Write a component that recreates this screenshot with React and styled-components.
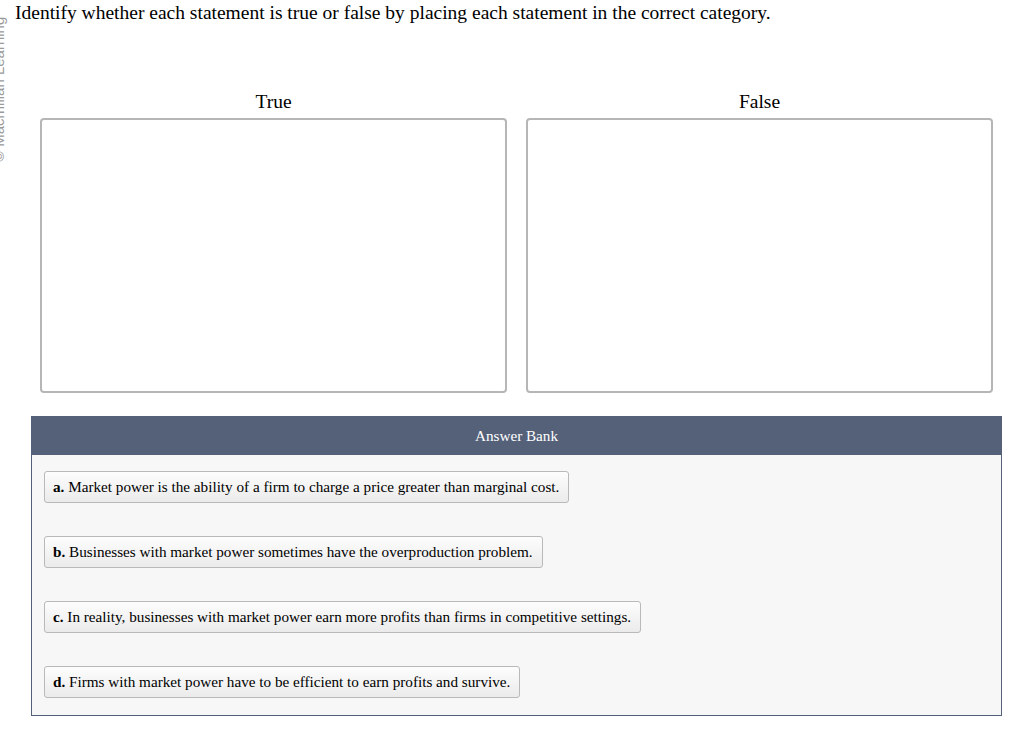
import React from "react";
import styled, { createGlobalStyle } from "styled-components";

const Global = createGlobalStyle`
  html, body { margin: 0; padding: 0; background: #fff; }
  body { font-family: "Liberation Serif", "Times New Roman", serif; color: #000; }
`;

const Page = styled.div`
  position: relative;
  width: 1024px;
  min-height: 753px;
  overflow: hidden;
`;

const Watermark = styled.span`
  position: absolute;
  left: -8px;
  top: 162px;
  transform-origin: 0 0;
  transform: rotate(-90deg);
  font-family: "Liberation Sans", Arial, sans-serif;
  font-size: 15px;
  line-height: 14px;
  color: #9a9a9a;
  white-space: nowrap;
`;

const Title = styled.h1`
  margin: 0;
  padding: 1px 0 0 15px;
  font-size: 19.5px;
  line-height: 24px;
  font-weight: normal;
`;

const Categories = styled.div`
  display: grid;
  grid-template-columns: 467px 467px;
  column-gap: 19px;
  margin: 67px 0 0 40px;
`;

const Category = styled.div`
  display: flex;
  flex-direction: column;
`;

const Label = styled.div`
  text-align: center;
  font-size: 19.5px;
  line-height: 20px;
  height: 20px;
`;

const DropZone = styled.div`
  margin-top: 6px;
  height: 275px;
  box-sizing: border-box;
  border: 2px solid #b6b6b6;
  border-radius: 4px;
  background: #fff;
`;

const Bank = styled.div`
  margin: 23px 0 0 31px;
  width: 971px;
  box-sizing: border-box;
  border: 1px solid #546179;
  background: #f7f7f7;
`;

const BankHeader = styled.div`
  height: 38px;
  background: #546179;
  color: #fff;
  font-size: 15.2px;
  line-height: 38px;
  text-align: center;
`;

const BankBody = styled.div`
  display: flex;
  flex-direction: column;
  align-items: flex-start;
  gap: 33px;
  padding: 16px 12px 17px 12px;
`;

const Item = styled.div`
  box-sizing: border-box;
  height: 32px;
  padding: 0 9px 0 8px;
  border: 1px solid #b9b9b9;
  border-radius: 3px;
  background: linear-gradient(#fdfdfd, #ebebeb);
  font-size: 15.2px;
  line-height: 30px;
  white-space: nowrap;
`;

const Letter = styled.b`
  font-weight: bold;
`;

const items = [
  ["a.", "Market power is the ability of a firm to charge a price greater than marginal cost."],
  ["b.", "Businesses with market power sometimes have the overproduction problem."],
  ["c.", "In reality, businesses with market power earn more profits than firms in competitive settings."],
  ["d.", "Firms with market power have to be efficient to earn profits and survive."],
];

export default function App() {
  return (
    <Page>
      <Global />
      <Watermark>© Macmillan Learning</Watermark>
      <Title>
        Identify whether each statement is true or false by placing each statement in the correct category.
      </Title>
      <Categories>
        <Category>
          <Label>True</Label>
          <DropZone />
        </Category>
        <Category>
          <Label>False</Label>
          <DropZone />
        </Category>
      </Categories>
      <Bank>
        <BankHeader>Answer Bank</BankHeader>
        <BankBody>
          {items.map(([l, t]) => (
            <Item key={l}>
              <Letter>{l}</Letter> {t}
            </Item>
          ))}
        </BankBody>
      </Bank>
    </Page>
  );
}
